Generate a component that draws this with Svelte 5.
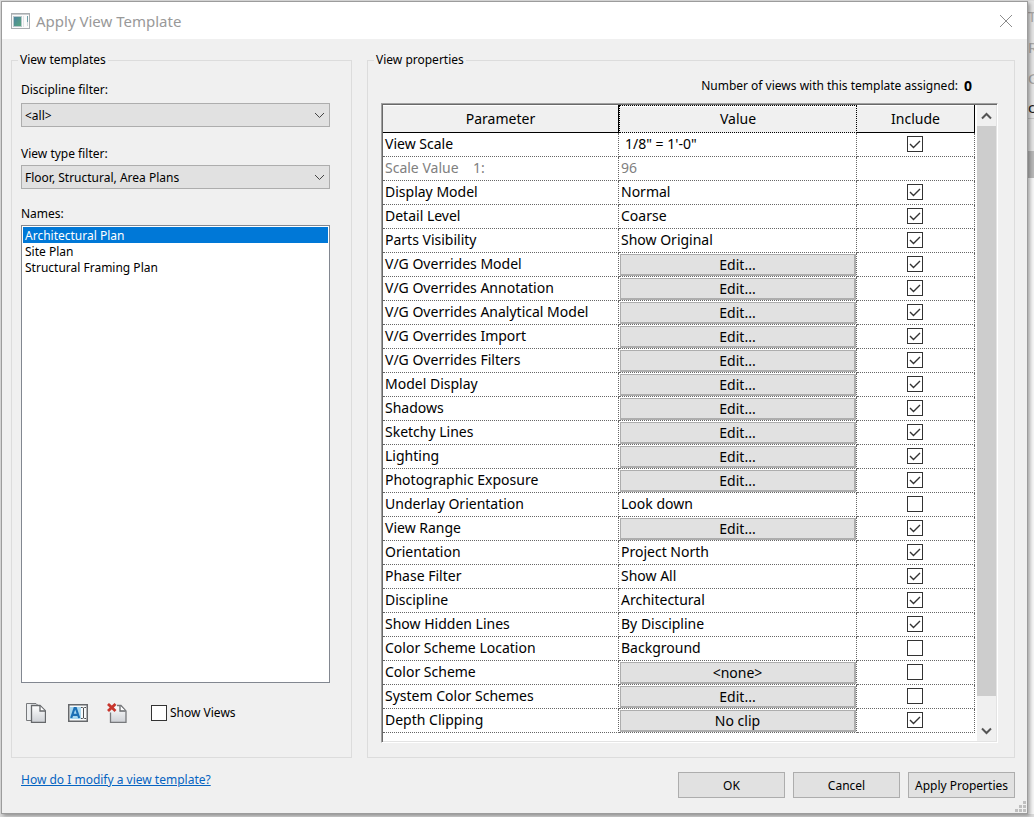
<script>
  const templates = ['Architectural Plan', 'Site Plan', 'Structural Framing Plan'];
  let selected = $state('Architectural Plan');
  let showViews = $state(false);

  let rows = $state([
    { name: 'View Scale', value: '1/8" = 1\'-0"', kind: 'inset', include: true },
    { name: 'Scale Value    1:', value: '96', kind: 'disabled', include: null },
    { name: 'Display Model', value: 'Normal', kind: 'text', include: true },
    { name: 'Detail Level', value: 'Coarse', kind: 'text', include: true },
    { name: 'Parts Visibility', value: 'Show Original', kind: 'text', include: true },
    { name: 'V/G Overrides Model', value: 'Edit...', kind: 'button', include: true },
    { name: 'V/G Overrides Annotation', value: 'Edit...', kind: 'button', include: true },
    { name: 'V/G Overrides Analytical Model', value: 'Edit...', kind: 'button', include: true },
    { name: 'V/G Overrides Import', value: 'Edit...', kind: 'button', include: true },
    { name: 'V/G Overrides Filters', value: 'Edit...', kind: 'button', include: true },
    { name: 'Model Display', value: 'Edit...', kind: 'button', include: true },
    { name: 'Shadows', value: 'Edit...', kind: 'button', include: true },
    { name: 'Sketchy Lines', value: 'Edit...', kind: 'button', include: true },
    { name: 'Lighting', value: 'Edit...', kind: 'button', include: true },
    { name: 'Photographic Exposure', value: 'Edit...', kind: 'button', include: true },
    { name: 'Underlay Orientation', value: 'Look down', kind: 'text', include: false },
    { name: 'View Range', value: 'Edit...', kind: 'button', include: true },
    { name: 'Orientation', value: 'Project North', kind: 'text', include: true },
    { name: 'Phase Filter', value: 'Show All', kind: 'text', include: true },
    { name: 'Discipline', value: 'Architectural', kind: 'text', include: true },
    { name: 'Show Hidden Lines', value: 'By Discipline', kind: 'text', include: true },
    { name: 'Color Scheme Location', value: 'Background', kind: 'text', include: false },
    { name: 'Color Scheme', value: '<none>', kind: 'button', include: false },
    { name: 'System Color Schemes', value: 'Edit...', kind: 'button', include: false },
    { name: 'Depth Clipping', value: 'No clip', kind: 'button', include: true }
  ]);
</script>

<div class="page">
  <section class="dialog" aria-labelledby="title">
    <header>
      <svg width="19" height="16" viewBox="0 0 19 16" aria-hidden="true">
        <defs>
          <linearGradient id="pane" x1="0" y1="0" x2="1" y2="1">
            <stop offset="0" stop-color="#4d83a0" />
            <stop offset="1" stop-color="#55a67c" />
          </linearGradient>
        </defs>
        <rect x="0.5" y="0.5" width="18" height="15" fill="#fbfbfb" stroke="#a9adb0" />
        <path d="M1 1.5h17" stroke="#c9cccf" />
        <rect x="2" y="3" width="9" height="11" fill="#b9c8cc" />
        <rect x="3" y="4" width="7" height="9" fill="url(#pane)" />
        <path d="M12.5 3v11" stroke="#dfe4e6" />
        <rect x="16" y="3" width="1" height="6" fill="#6f9fa8" />
        <rect x="16" y="9" width="1" height="4" fill="#d3dcdf" />
      </svg>
      <h1 id="title">Apply View Template</h1>
      <button class="close" aria-label="Close">
        <svg width="14" height="14" viewBox="0 0 14 14"><path d="M1 1l12 12M13 1L1 13" stroke="#8c8c8c" fill="none" /></svg>
      </button>
    </header>

    <div class="groups">
      <fieldset class="templates">
        <legend>View templates</legend>

        <div class="field discipline">
          <label for="discipline">Discipline filter:</label>
          <div class="combo">
            <select id="discipline"><option>&lt;all&gt;</option></select>
            <svg width="11" height="7" viewBox="0 0 11 7" aria-hidden="true"><path d="M1 1l4.500 4.500L10 1" fill="none" stroke="#444" /></svg>
          </div>
        </div>

        <div class="field viewtype">
          <label for="viewtype">View type filter:</label>
          <div class="combo">
            <select id="viewtype"><option>Floor, Structural, Area Plans</option></select>
            <svg width="11" height="7" viewBox="0 0 11 7" aria-hidden="true"><path d="M1 1l4.500 4.500L10 1" fill="none" stroke="#444" /></svg>
          </div>
        </div>

        <div class="field names">
          <label for="names">Names:</label>
          <select id="names" class="list" size="3" bind:value={selected}>
            {#each templates as t}<option value={t}>{t}</option>{/each}
          </select>
        </div>

        <div class="tools">
          <button class="tool" aria-label="Duplicate">
            <svg width="20" height="20" viewBox="0 0 20 20">
              <defs>
                <linearGradient id="sheet" x1="0" y1="0" x2="0" y2="1">
                  <stop offset="0" stop-color="#fff" />
                  <stop offset="1" stop-color="#cdd0d5" />
                </linearGradient>
              </defs>
              <path d="M5 17.500H.5V.5h9.500l2 2" fill="#eceef0" stroke="#77797c" />
              <path d="M5.500 2.500h8.500l5.500 5.500v11.500h-14z" fill="url(#sheet)" stroke="#66686b" stroke-width="1.300" />
              <path d="M14 3v5h5" fill="#fff" stroke="#66686b" stroke-width="1.300" />
            </svg>
          </button>
          <button class="tool rename" aria-label="Rename">
            <svg width="20" height="18" viewBox="0 0 20 18">
              <rect x=".75" y=".75" width="18.500" height="16.500" fill="#f8fafb" stroke="#66686b" stroke-width="1.500" />
              <rect x="2" y="3" width="11" height="12" fill="#a9d8f0" />
              <path d="M3.200 14L6.600 4h1.200L11.200 14M4.800 10.800h5" fill="none" stroke="#1c6fb5" stroke-width="2.200" />
              <path d="M13 3.500h1.500l1 .7 1-.7H18M13 14.500h1.500l1-.7 1 .7H18M15.500 4v10" fill="none" stroke="#4b4d50" />
            </svg>
          </button>
          <button class="tool" aria-label="Delete">
            <svg width="20" height="20" viewBox="0 0 20 20">
              <path d="M3.500 9.500v10h15.500v-11.500l-5-5.500h-4" fill="url(#sheet)" stroke="#77797c" stroke-width="1.300" />
              <path d="M13 3v5h5.500" fill="#fff" stroke="#66686b" stroke-width="1.300" />
              <path d="M1 1l7.500 7M8.500 1L1 8" stroke="#c8362d" stroke-width="2.800" />
            </svg>
          </button>
          <label class="views"><input type="checkbox" class="check" bind:checked={showViews} />Show Views</label>
        </div>
      </fieldset>

      <fieldset class="properties">
        <legend>View properties</legend>
        <p class="count">Number of views with this template assigned:<b>0</b></p>
        <div class="frame">
          <div class="sheet">
            <table>
              <colgroup><col class="c1" /><col class="c2" /><col class="c3" /></colgroup>
              <thead>
                <tr><th>Parameter</th><th class="focus">Value</th><th>Include</th></tr>
              </thead>
              <tbody>
                {#each rows as r}
                  <tr class:off={r.kind === 'disabled'}>
                    <td>{r.name}</td>
                    <td class={r.kind}>
                      {#if r.kind === 'button'}<button>{r.value}</button>{:else}{r.value}{/if}
                    </td>
                    <td class="inc">
                      {#if r.include !== null}
                        <input type="checkbox" class="check" aria-label={'Include ' + r.name} bind:checked={r.include} />
                      {/if}
                    </td>
                  </tr>
                {/each}
              </tbody>
            </table>
          </div>
          <div class="scroll">
            <button aria-label="Scroll up"><svg width="11" height="8" viewBox="0 0 11 8"><path d="M1 6.500L5.500 2 10 6.500" fill="none" stroke="#555" stroke-width="2" /></svg></button>
            <div class="track"><div class="thumb"></div></div>
            <button aria-label="Scroll down"><svg width="11" height="8" viewBox="0 0 11 8"><path d="M1 1.500L5.500 6 10 1.500" fill="none" stroke="#555" stroke-width="2" /></svg></button>
          </div>
        </div>
      </fieldset>
    </div>

    <footer>
      <a href="#help">How do I modify a view template?</a>
      <div class="actions">
        <button>OK</button>
        <button>Cancel</button>
        <button>Apply Properties</button>
      </div>
    </footer>
    <svg class="grip" width="11" height="11" viewBox="0 0 11 11" aria-hidden="true">
      <path d="M8 0h3v3H8zM4 4h3v3H4zM8 4h3v3H8zM0 8h3v3H0zM4 8h3v3H4zM8 8h3v3H8z" fill="#bfbfbf" />
    </svg>
  </section>

  <aside>
    <span>T</span><span>R</span><span>G</span><span class="dark">c</span>
    <i></i>
  </aside>
</div>

<style>
  :global(body) { margin: 0; }
  .page, .page * { box-sizing: border-box; }
  .page {
    display: grid;
    grid-template-columns: 1fr 6px;
    min-height: 100vh;
    padding: 1px 0 3px 1px;
    background: #dcdcdc;
    font: 12px/16px "Noto Sans", "Open Sans", sans-serif;
    color: #000;
  }
  button, select { font: inherit; color: inherit; border-radius: 0; margin: 0; }
  .dialog {
    position: relative;
    z-index: 1;
    display: flex;
    flex-direction: column;
    border: 1px solid #9c9c9c;
    background: #f0f0f0;
    box-shadow: 2px 2px 4px rgba(0, 0, 0, 0.35);
  }
  header {
    display: flex;
    align-items: center;
    height: 37px;
    padding: 0 14px 0 9px;
    background: #fff;
  }
  h1 {
    flex: 1;
    margin: 0 0 0 6px;
    font-size: 15px;
    line-height: 20px;
    font-weight: 400;
    color: #999;
  }
  .close { padding: 0; border: 0; background: none; display: flex; }

  .groups {
    flex: 1;
    display: grid;
    grid-template-columns: minmax(280px, 341px) 1fr;
    gap: 15px;
    padding: 13px 12px 0 9px;
  }
  fieldset {
    display: flex;
    flex-direction: column;
    min-width: 0;
    margin: 0;
    border: 1px solid #dcdcdc;
  }
  legend { padding: 0 2px; margin-left: -3px; }
  .templates { padding: 0 21px 32px 9px; }
  .properties { padding: 0 16px 14px 13px; }
  .properties legend { margin-left: -7px; }

  .field { display: flex; flex-direction: column; }
  .discipline { margin-top: 14px; gap: 5px; }
  .viewtype { margin-top: 19px; gap: 3px; }
  .names { margin-top: 17px; gap: 3px; flex: 1; }
  .combo { display: grid; align-items: center; }
  .combo select {
    grid-area: 1 / 1;
    appearance: none;
    width: 100%;
    height: 24px;
    padding: 2px 24px 0 3px;
    border: 1px solid #adadad;
    background: #e1e1e1;
  }
  .combo svg { grid-area: 1 / 1; justify-self: end; margin-right: 5px; pointer-events: none; }
  .list {
    flex: 1;
    width: 100%;
    padding: 1px;
    border: 1px solid #828790;
    background: #fff;
    outline: 0;
    overflow: hidden;
  }
  .list option { min-height: 16px; height: 16px; padding: 0 2px; line-height: 16px; }
  .list option:checked {
    background: #0078d7 linear-gradient(#0078d7, #0078d7);
    color: #fff;
    -webkit-text-fill-color: #fff;
  }

  .tools { display: flex; align-items: center; height: 24px; margin: 18px 0 0 5px; }
  .tool { display: flex; padding: 0; border: 0; background: none; margin-right: 19px; }
  .rename { margin-left: 3px; }
  .views { display: flex; align-items: center; gap: 3px; margin-left: 5px; }
  .check {
    appearance: none;
    flex: none;
    display: block;
    width: 16px;
    height: 16px;
    margin: 0;
    border: 1px solid #333;
    background: #fff;
  }
  .check:checked {
    background: url("data:image/svg+xml,%3Csvg xmlns='http://www.w3.org/2000/svg' viewBox='0 0 14 14'%3E%3Cpath d='M2 7l3.500 3.500L12 4' fill='none' stroke='%23333' stroke-width='1.400'/%3E%3C/svg%3E") #fff;
  }

  .count { display: flex; justify-content: flex-end; gap: 6px; margin: 9px 26px 8px 0; line-height: 18px; }
  .count b { font-size: 14px; }
  .frame {
    flex: 1;
    display: flex;
    gap: 2px;
    background: #fff;
    border: 1px solid;
    border-color: #a0a0a0 #fff #fff #a0a0a0;
    box-shadow: inset 1px 1px #696969, inset -1px -1px #e3e3e3;
    padding: 1px;
  }
  .sheet { flex: 1; padding-bottom: 8px; }
  table {
    width: 100%;
    table-layout: fixed;
    border-collapse: separate;
    border-spacing: 0;
    font-size: 14px;
    line-height: 20px;
  }
  .c1 { width: 236px; }
  .c2 { width: 238px; }
  .c3 { width: 118px; }
  th {
    height: 28px;
    padding: 0;
    font-weight: 400;
    background: #f0f0f0;
    border: solid #000;
    border-width: 0 1px 1px 0;
    box-shadow: inset 0 1px #fff;
  }
  th.focus { border: 1px dotted #000; }
  td {
    height: 24px;
    padding: 0 0 1px 2px;
    border: dotted #666;
    border-width: 0 1px 1px 0;
    white-space: pre;
    overflow: hidden;
  }
  .off { color: #808080; }
  td.inset { padding-left: 6px; }
  td.button { padding: 1px 0 0 1px; }
  td button {
    display: block;
    width: 100%;
    height: 22px;
    padding: 0;
    line-height: 18px;
    background: #e1e1e1;
    border: solid #adadad;
    border-width: 1px 2px 2px 1px;
  }
  td.inc { padding: 0 2px 1px 0; }
  .inc .check { margin: 0 auto; }

  .scroll { display: flex; flex-direction: column; width: 19px; background: #f0f0f0; }
  .scroll button {
    display: flex;
    align-items: center;
    justify-content: center;
    height: 21px;
    padding: 0;
    border: 0;
    background: none;
  }
  .track { flex: 1; }
  .thumb { height: 96%; background: #cdcdcd; }

  footer {
    display: flex;
    justify-content: space-between;
    padding: 14px 12px 15px 19px;
  }
  a { color: #0563c1; text-decoration: underline; }
  .actions { display: flex; gap: 8px; }
  .actions button {
    width: 107px;
    height: 26px;
    padding: 2px 0 0;
    border: 1px solid #adadad;
    background: #e1e1e1;
    white-space: nowrap;
  }
  .grip { position: absolute; right: 1px; bottom: 1px; }

  aside {
    display: flex;
    flex-direction: column;
    overflow: hidden;
    background: linear-gradient(#e6e6e6 176px, #f8f8f8 176px);
    font-size: 15px;
    color: #aaa;
  }
  aside span { height: 31px; line-height: 30px; }
  aside .dark { height: 25px; line-height: 26px; color: #222; border-bottom: 1px solid #c8c8c8; }
  aside i { height: 27px; margin-top: 32px; background: #bababa; }
</style>
